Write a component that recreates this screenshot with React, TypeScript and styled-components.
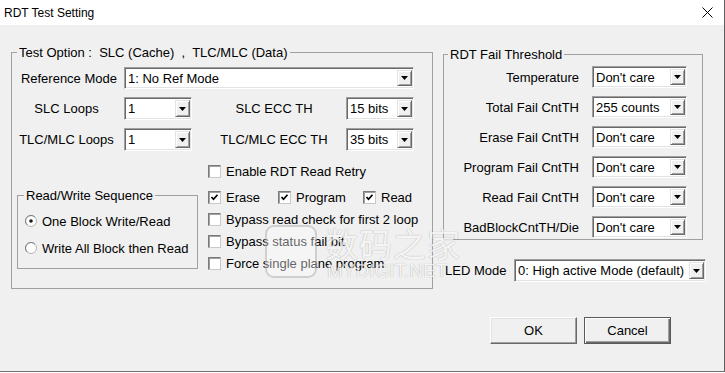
import React from 'react';
import styled, { createGlobalStyle, css } from 'styled-components';

const GlobalStyle = createGlobalStyle`
  * {
    box-sizing: border-box;
  }
  html,
  body {
    margin: 0;
    padding: 0;
    background: #fff;
    font-family: 'Liberation Sans', Arial, sans-serif;
  }
`;

const Window = styled.div`
  width: 725px;
  height: 373px;
  display: flex;
  flex-direction: column;
  background: #fff;
  color: #000;
  font-family: 'Liberation Sans', Arial, sans-serif;
  font-size: 13px;
  overflow: hidden;
`;

const TitleBar = styled.div`
  flex: none;
  height: 25px;
  display: flex;
  align-items: center;
  justify-content: space-between;
  padding: 0 11px 0 4px;
  border-right: 1px solid #5f5f5f;
  font-size: 12px;
`;

const Body = styled.div`
  position: relative;
  flex: none;
  height: 347px;
  display: flex;
  align-items: flex-start;
  gap: 10px;
  padding: 20px 0 0 11px;
  background: #f0f0f0;
  border-right: 1px solid #5f5f5f;
  border-bottom: 1px solid #707070;
`;

const GroupBox = styled.fieldset`
  margin: 0;
  min-width: 0;
  border: 1px solid #a0a0a0;
`;

const Legend = styled.legend<{ $ml?: number }>`
  padding: 0 2px;
  margin-left: ${p => p.$ml ?? 0}px;
  line-height: 15px;
  font-size: 13px;
  white-space: pre;
`;

const OptionGroup = styled(GroupBox)`
  width: 422px;
  padding: 7px 4px 14px 4px;
`;

const SequenceGroup = styled(GroupBox)`
  width: 181px;
  margin-top: 28px;
  padding: 7px 0 9px 7px;
  display: flex;
  flex-direction: column;
  gap: 5px;
`;

const ThresholdGroup = styled(GroupBox)`
  width: 260px;
  padding: 4px 15px 1px 4px;
`;

const FormGrid = styled.div`
  display: grid;
  grid-template-columns: 108px 68px 154px 68px;
  grid-template-rows: 22px 23px 23px;
  row-gap: 8px;
`;

const FieldLabel = styled.span<{ $align?: 'right' | 'center'; $pl?: number; $pr?: number }>`
  align-self: center;
  text-align: ${p => p.$align ?? 'center'};
  padding-left: ${p => p.$pl ?? 0}px;
  padding-right: ${p => p.$pr ?? 0}px;
  white-space: nowrap;
`;

const Combo = styled.div<{ $span?: number; $w?: number; $h?: number }>`
  ${p => p.$span && css`grid-column: span ${p.$span};`}
  ${p => p.$w && css`width: ${p.$w}px;`}
  ${p => p.$h && css`height: ${p.$h}px;`}
  display: flex;
  align-items: stretch;
  padding: 2px 1px 2px 3px;
  background: #fff;
  border: 1px solid;
  border-color: #a0a0a0 #fff #fff #a0a0a0;
  box-shadow: inset 1px 1px 0 #696969, inset -1px -1px 0 #e3e3e3;
  white-space: nowrap;
`;

const ComboText = styled.span`
  flex: 1;
  display: flex;
  align-items: center;
  overflow: hidden;
`;

const DropButton = styled.span`
  flex: none;
  width: 15px;
  display: flex;
  align-items: center;
  justify-content: center;
  background: #f0f0f0;
  border: 1px solid;
  border-color: #e3e3e3 #696969 #696969 #e3e3e3;
  box-shadow: inset 1px 1px 0 #fff, inset -1px -1px 0 #a0a0a0;
`;

const LowerRow = styled.div`
  display: flex;
  align-items: flex-start;
  gap: 10px;
  margin-top: 9px;
  padding-left: 1px;
`;

const RadioRow = styled.label`
  height: 22px;
  display: flex;
  align-items: center;
  gap: 5px;
  white-space: nowrap;
`;

const CheckList = styled.div`
  display: flex;
  flex-direction: column;
`;

const CheckRow = styled.div<{ $mb?: number }>`
  height: 22px;
  display: flex;
  align-items: center;
  margin-bottom: ${p => p.$mb ?? 0}px;
`;

const CheckItem = styled.label<{ $w?: number }>`
  ${p => p.$w && css`width: ${p.$w}px;`}
  display: flex;
  align-items: center;
  gap: 5px;
  white-space: nowrap;
`;

const Box = styled.span`
  flex: none;
  width: 13px;
  height: 13px;
  display: flex;
  align-items: center;
  justify-content: center;
  background: #fff;
  border: 1px solid;
  border-color: #7a7a7a #c8c8c8 #c8c8c8 #7a7a7a;
  box-shadow: inset 1px 1px 0 #a0a0a0;
`;

const SideColumn = styled.div`
  width: 263px;
  margin-top: 2px;
  display: flex;
  flex-direction: column;
`;

const ThresholdGrid = styled.div`
  display: grid;
  grid-template-columns: 1fr 95px;
  grid-auto-rows: 22px;
  column-gap: 13px;
  row-gap: 8px;
`;

const LedRow = styled.div`
  height: 23px;
  margin-top: 19px;
  padding-left: 2px;
  display: flex;
  align-items: stretch;
  justify-content: space-between;
`;

const ButtonRow = styled.div`
  margin-top: 35px;
  padding-left: 47px;
  display: flex;
  gap: 7px;
`;

const PushButton = styled.button<{ $default?: boolean }>`
  width: 87px;
  height: 27px;
  padding: 0;
  font-family: 'Liberation Sans', Arial, sans-serif;
  font-size: 13px;
  color: #000;
  background: #f0f0f0;
  border: 1px solid;
  border-color: #fff #696969 #696969 #fff;
  box-shadow: inset -1px -1px 0 #a0a0a0, inset 1px 1px 0 #e3e3e3;
  ${p =>
    p.$default &&
    css`
      border-color: #5a5a5a;
      box-shadow: inset 1px 1px 0 #fff, inset -1px -1px 0 #696969, inset -2px -2px 0 #a0a0a0;
    `}
`;

const Watermark = styled.div`
  position: absolute;
  left: 265px;
  top: 200px;
  display: flex;
  gap: 8px;
  pointer-events: none;
  opacity: 0.7;
`;

const WatermarkLogo = styled.div`
  width: 52px;
  height: 53px;
  border: 2px solid rgba(150, 150, 150, 0.55);
  border-radius: 9px;
  background: rgba(255, 255, 255, 0.55);
`;

const WatermarkText = styled.div`
  display: flex;
  flex-direction: column;
  color: rgba(255, 255, 255, 0.95);
  text-shadow: 0 0 1px rgba(110, 110, 110, 0.9);
`;

const WatermarkTitle = styled.span`
  font-family: 'Noto Sans CJK SC', sans-serif;
  font-size: 33px;
  line-height: 36px;
  letter-spacing: 1px;
`;

const WatermarkSub = styled.span`
  font-family: 'Liberation Sans', Arial, sans-serif;
  font-size: 19px;
  line-height: 20px;
  margin-left: 2px;
`;

const Arrow = () => (
  <svg width="7" height="4" viewBox="0 0 7 4">
    <polygon points="0,0 7,0 3.5,4" fill="#000" />
  </svg>
);

const ComboBox = ({ value, ...rest }: { value: string; $span?: number; $w?: number; $h?: number }) => (
  <Combo {...rest}>
    <ComboText>{value}</ComboText>
    <DropButton>
      <Arrow />
    </DropButton>
  </Combo>
);

const CheckBox = ({ checked }: { checked?: boolean }) => (
  <Box>
    {checked && (
      <svg width="9" height="9" viewBox="0 0 9 9">
        <polyline points="1.5,4 3.5,6.2 7.5,1.8" fill="none" stroke="#000" strokeWidth="1.7" />
      </svg>
    )}
  </Box>
);

const Radio = ({ checked }: { checked?: boolean }) => (
  <svg width="12" height="12" viewBox="0 0 12 12">
    <circle cx="6" cy="6" r="5.5" fill="#fff" stroke="#b4b4b4" />
    <path d="M2.1 9.9 A5.5 5.5 0 0 1 9.9 2.1" fill="none" stroke="#808080" />
    {checked && <circle cx="6" cy="6" r="1.8" fill="#1a1a1a" />}
  </svg>
);

const CloseIcon = () => (
  <svg width="11" height="11" viewBox="0 0 11 11">
    <path d="M0.5 0.5 L10.5 10.5 M10.5 0.5 L0.5 10.5" stroke="#000" strokeWidth="1" />
  </svg>
);

const thresholds = [
  ['Temperature', "Don't care"],
  ['Total Fail CntTH', '255 counts'],
  ['Erase Fail CntTH', "Don't care"],
  ['Program Fail CntTH', "Don't care"],
  ['Read Fail CntTH', "Don't care"],
  ['BadBlockCntTH/Die', "Don't care"]
];

const App = () => {
  return (
    <>
      <GlobalStyle />
      <Window>
        <TitleBar>
          <span>RDT Test Setting</span>
          <CloseIcon />
        </TitleBar>
        <Body>
          <OptionGroup>
            <Legend $ml={1}>{'Test Option :  SLC (Cache)  ,  TLC/MLC (Data)'}</Legend>
            <FormGrid>
              <FieldLabel $align='right' $pr={7}>
                Reference Mode
              </FieldLabel>
              <ComboBox $span={3} value='1: No Ref Mode' />

              <FieldLabel $pr={7}>SLC Loops</FieldLabel>
              <ComboBox value='1' />
              <FieldLabel $pl={10}>SLC ECC TH</FieldLabel>
              <ComboBox value='15 bits' />

              <FieldLabel $pr={7}>TLC/MLC Loops</FieldLabel>
              <ComboBox value='1' />
              <FieldLabel $pl={10}>TLC/MLC ECC TH</FieldLabel>
              <ComboBox value='35 bits' />
            </FormGrid>

            <LowerRow>
              <SequenceGroup>
                <Legend $ml={-1}>Read/Write Sequence</Legend>
                <RadioRow>
                  <Radio checked />
                  One Block Write/Read
                </RadioRow>
                <RadioRow>
                  <Radio />
                  Write All Block then Read
                </RadioRow>
              </SequenceGroup>

              <CheckList>
                <CheckRow $mb={4}>
                  <CheckItem>
                    <CheckBox />
                    Enable RDT Read Retry
                  </CheckItem>
                </CheckRow>
                <CheckRow>
                  <CheckItem $w={70}>
                    <CheckBox checked />
                    Erase
                  </CheckItem>
                  <CheckItem $w={85}>
                    <CheckBox checked />
                    Program
                  </CheckItem>
                  <CheckItem>
                    <CheckBox checked />
                    Read
                  </CheckItem>
                </CheckRow>
                <CheckRow>
                  <CheckItem>
                    <CheckBox />
                    Bypass read check for first 2 loop
                  </CheckItem>
                </CheckRow>
                <CheckRow>
                  <CheckItem>
                    <CheckBox />
                    Bypass status fail bit
                  </CheckItem>
                </CheckRow>
                <CheckRow>
                  <CheckItem>
                    <CheckBox />
                    Force single plane program
                  </CheckItem>
                </CheckRow>
              </CheckList>
            </LowerRow>
          </OptionGroup>

          <SideColumn>
            <ThresholdGroup>
              <Legend>RDT Fail Threshold</Legend>
              <ThresholdGrid>
                {thresholds.map(([label, value]) => (
                  <React.Fragment key={label}>
                    <FieldLabel $align='right'>{label}</FieldLabel>
                    <ComboBox value={value} />
                  </React.Fragment>
                ))}
              </ThresholdGrid>
            </ThresholdGroup>

            <LedRow>
              <FieldLabel>LED Mode</FieldLabel>
              <ComboBox $w={192} value='0: High active Mode (default)' />
            </LedRow>

            <ButtonRow>
              <PushButton>OK</PushButton>
              <PushButton $default>Cancel</PushButton>
            </ButtonRow>
          </SideColumn>

          <Watermark>
            <WatermarkLogo />
            <WatermarkText>
              <WatermarkTitle>数码之家</WatermarkTitle>
              <WatermarkSub>MYDIGIT.NET</WatermarkSub>
            </WatermarkText>
          </Watermark>
        </Body>
      </Window>
    </>
  );
};

export default App;
